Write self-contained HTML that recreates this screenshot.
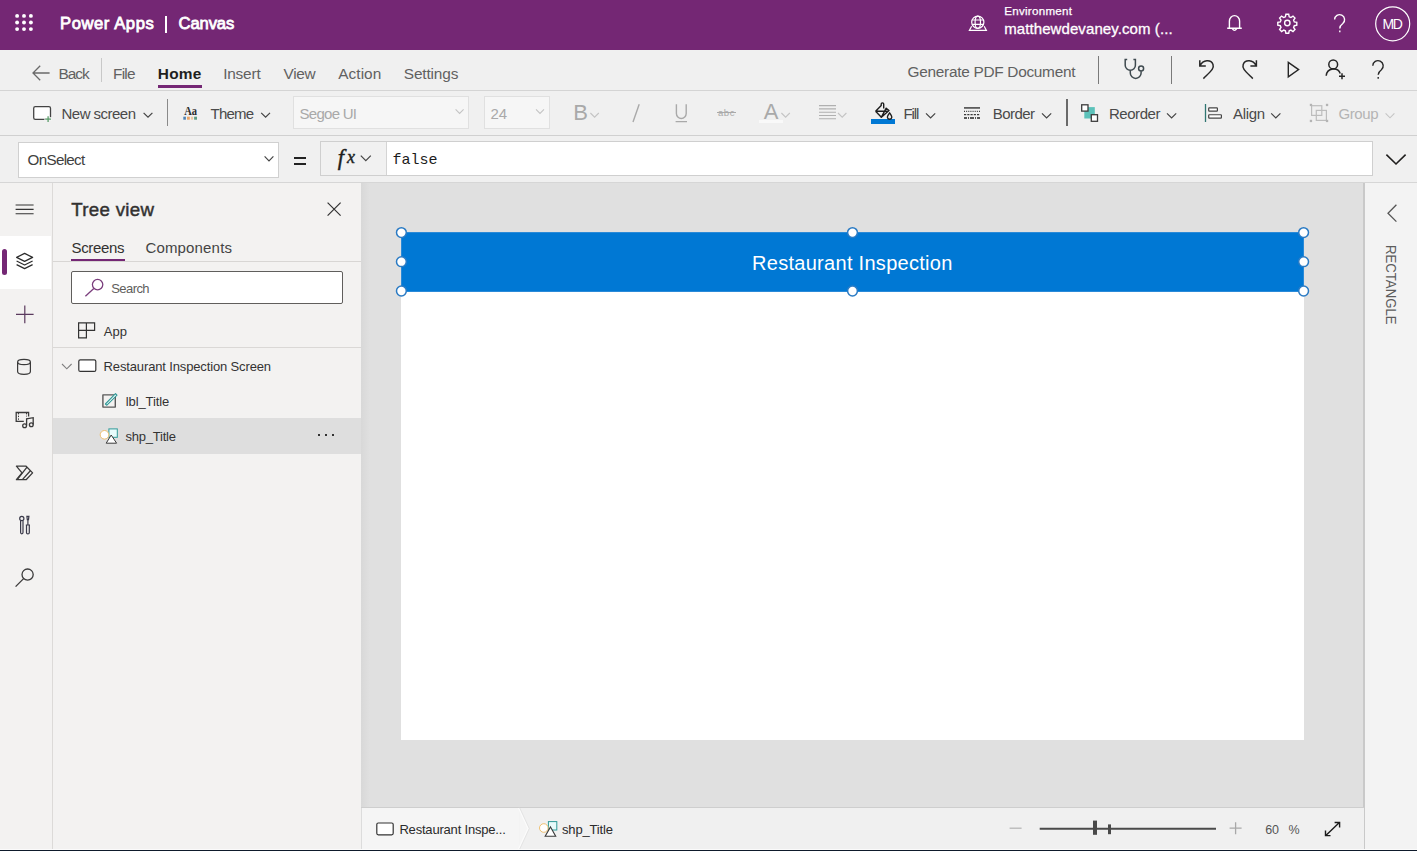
<!DOCTYPE html>
<html><head><meta charset="utf-8">
<style>
*{box-sizing:border-box;margin:0;padding:0}
html,body{width:1417px;height:851px;overflow:hidden;background:#f3f2f1;font-family:"Liberation Sans",sans-serif;color:#323130}
.a{position:absolute}
.t{position:absolute;white-space:pre}
svg{position:absolute;left:0;top:0;overflow:visible}
</style></head><body>
<!-- top header -->
<div class="a" style="left:0;top:0;width:1417px;height:50px;background:#742774"></div>
<!-- menu row -->
<div class="a" style="left:0;top:50px;width:1417px;height:41px;background:#f0f0f0;border-bottom:1px solid #d4d4d4"></div>
<!-- ribbon -->
<div class="a" style="left:0;top:91px;width:1417px;height:45px;background:#f0f0f0;border-bottom:1px solid #d0d0d0"></div>
<!-- formula bar -->
<div class="a" style="left:0;top:136px;width:1417px;height:47px;background:#f0f0f0;border-bottom:1px solid #d6d6d6"></div>
<!-- left rail -->
<div class="a" style="left:0;top:183px;width:53px;height:668px;background:#f3f2f1;border-right:1px solid #dcdad8"></div>
<div class="a" style="left:0;top:236px;width:51px;height:53px;background:#ffffff"></div>
<div class="a" style="left:2px;top:249px;width:5px;height:26px;background:#742774;border-radius:3px"></div>
<!-- tree panel -->
<div class="a" style="left:53px;top:183px;width:308px;height:668px;background:#f3f2f1"></div>
<div class="a" style="left:53px;top:261px;width:308px;height:1px;background:#d8d6d4"></div>
<div class="a" style="left:71px;top:259px;width:54px;height:2px;background:#742774"></div>
<div class="a" style="left:71px;top:271px;width:272px;height:33px;background:#fff;border:1px solid #605e5c;border-radius:2px"></div>
<div class="a" style="left:53px;top:347px;width:308px;height:1px;background:#dad8d6"></div>
<div class="a" style="left:53px;top:418px;width:308px;height:36px;background:#dedede"></div>
<div class="a" style="left:318px;top:434px;width:2px;height:2px;background:#333"></div>
<div class="a" style="left:325px;top:434px;width:2px;height:2px;background:#333"></div>
<div class="a" style="left:332px;top:434px;width:2px;height:2px;background:#333"></div>
<!-- canvas area -->
<div class="a" style="left:361px;top:183px;width:1003px;height:624px;background:#e0e0e0"></div>
<div class="a" style="left:361px;top:183px;width:9px;height:624px;background:linear-gradient(90deg,#d8d8d8,#e0e0e0)"></div>
<div class="a" style="left:401px;top:232px;width:903px;height:508px;background:#fff"></div>
<div class="a" style="left:401px;top:232px;width:903px;height:60px;background:#0078d4"></div>
<!-- right panel -->
<div class="a" style="left:1363px;top:183px;width:54px;height:668px;background:#f3f3f3;border-left:2px solid #c9c9c9"></div>
<div class="t" style="left:1390.700px;top:245.200px;font-size:15px;line-height:15px;color:#5c5c5c;transform-origin:0 0;transform:rotate(90deg) translate(0,-50%) scaleX(0.878)">RECTANGLE</div>
<!-- bottom bar -->
<div class="a" style="left:361px;top:807px;width:1003px;height:44px;background:#f0f0f0;border-top:1px solid #cecece"></div>
<div class="a" style="left:361px;top:808px;width:158px;height:43px;background:#f5f5f5;border-left:1px solid #dcdcdc"></div>
<!-- ribbon boxes -->
<div class="a" style="left:293px;top:96px;width:176px;height:33px;background:#f6f6f6;border:1px solid #e0e0e0"></div>
<div class="a" style="left:484px;top:96px;width:66px;height:33px;background:#f6f6f6;border:1px solid #e0e0e0"></div>
<div class="a" style="left:717px;top:112px;width:19px;height:1px;background:#a9a9a9"></div>
<div class="a" style="left:759px;top:120px;width:24px;height:3px;background:#f9f9f9"></div>
<div class="a" style="left:871px;top:119px;width:24px;height:5px;background:#0078d4"></div>
<div class="a" style="left:167px;top:99px;width:1px;height:27px;background:#8a8a8a"></div>
<div class="a" style="left:1066px;top:99px;width:2px;height:27px;background:#6a6a6a"></div>
<!-- menu dividers -->
<div class="a" style="left:101px;top:58px;width:1px;height:24px;background:#c8c8c8"></div>
<div class="a" style="left:1098px;top:56px;width:1px;height:28px;background:#7a7a7a"></div>
<div class="a" style="left:1171px;top:56px;width:1px;height:28px;background:#7a7a7a"></div>
<div class="a" style="left:158px;top:85px;width:44px;height:3px;background:#742774"></div>
<!-- header bar | -->
<div class="a" style="left:165px;top:16px;width:2px;height:17px;background:#fff"></div>
<!-- formula bar boxes -->
<div class="a" style="left:18px;top:142px;width:261px;height:36px;background:#fff;border:1px solid #d0d0d0"></div>
<div class="a" style="left:320px;top:141px;width:1053px;height:35px;background:#fff;border:1px solid #cfcfcf"></div>
<div class="a" style="left:321px;top:142px;width:66px;height:33px;background:#f1f1f1;border-right:1px solid #d4d4d4"></div>
<div class="a" style="left:294px;top:157px;width:12px;height:2px;background:#222"></div>
<div class="a" style="left:294px;top:163px;width:12px;height:2px;background:#222"></div>
<!-- bottom line -->
<div class="a" style="left:0;top:849px;width:1417px;height:1px;background:#fbfbfb"></div>
<div class="a" style="left:0;top:850px;width:1417px;height:1px;background:#0e1a2b"></div>
<div class="t" style="left:60.0px;top:15.7px;font-size:16.6px;line-height:16.6px;color:#ffffff;letter-spacing:0.58px;-webkit-text-stroke:0.8px #ffffff">Power Apps</div>
<div class="t" style="left:178.6px;top:15.7px;font-size:16.6px;line-height:16.6px;color:#ffffff;letter-spacing:-0.13px;-webkit-text-stroke:0.8px #ffffff">Canvas</div>
<div class="t" style="left:1004.2px;top:4.7px;font-size:11.6px;line-height:11.6px;color:#ffffff;letter-spacing:0.27px;-webkit-text-stroke:0.25px #ffffff">Environment</div>
<div class="t" style="left:1004.2px;top:21.3px;font-size:15px;line-height:15px;color:#ffffff;letter-spacing:0.09px;-webkit-text-stroke:0.3px #ffffff">matthewdevaney.com (...</div>
<div class="t" style="left:1382.5px;top:17.1px;font-size:14px;line-height:14px;color:#ffffff;letter-spacing:-1.50px">MD</div>
<div class="t" style="left:58.5px;top:65.7px;font-size:15.4px;line-height:15.4px;color:#616161;letter-spacing:-1.01px">Back</div>
<div class="t" style="left:113.0px;top:65.7px;font-size:15.4px;line-height:15.4px;color:#616161;letter-spacing:-0.77px">File</div>
<div class="t" style="left:157.8px;top:65.7px;font-size:15.4px;line-height:15.4px;color:#201f1e;letter-spacing:0.24px;font-weight:bold">Home</div>
<div class="t" style="left:223.2px;top:65.7px;font-size:15.4px;line-height:15.4px;color:#616161;letter-spacing:-0.20px">Insert</div>
<div class="t" style="left:283.6px;top:65.7px;font-size:15.4px;line-height:15.4px;color:#616161;letter-spacing:-0.36px">View</div>
<div class="t" style="left:338.3px;top:65.7px;font-size:15.4px;line-height:15.4px;color:#616161;letter-spacing:0.04px">Action</div>
<div class="t" style="left:403.8px;top:65.7px;font-size:15.4px;line-height:15.4px;color:#616161;letter-spacing:-0.15px">Settings</div>
<div class="t" style="left:907.6px;top:64.0px;font-size:15.4px;line-height:15.4px;color:#616161;letter-spacing:-0.29px">Generate PDF Document</div>
<div class="t" style="left:61.5px;top:105.9px;font-size:15px;line-height:15px;color:#4a4a4a;letter-spacing:-0.52px">New screen</div>
<div class="t" style="left:210.6px;top:105.9px;font-size:15px;line-height:15px;color:#4a4a4a;letter-spacing:-0.82px">Theme</div>
<div class="t" style="left:299.5px;top:105.9px;font-size:15px;line-height:15px;color:#a9a9a9;letter-spacing:-0.72px">Segoe UI</div>
<div class="t" style="left:490.5px;top:105.9px;font-size:15px;line-height:15px;color:#a9a9a9;letter-spacing:-0.19px">24</div>
<div class="t" style="left:573.2px;top:102.1px;font-size:22px;line-height:22px;color:#a9a9a9;letter-spacing:0.00px">B</div>
<div class="t" style="left:718.0px;top:108.2px;font-size:9.5px;line-height:9.5px;color:#a9a9a9;letter-spacing:0.59px">abc</div>
<div class="t" style="left:763.8px;top:101.0px;font-size:22px;line-height:22px;color:#a9a9a9;letter-spacing:0.00px">A</div>
<div class="t" style="left:903.5px;top:106.0px;font-size:15px;line-height:15px;color:#4a4a4a;letter-spacing:-1.12px">Fill</div>
<div class="t" style="left:992.8px;top:106.0px;font-size:15px;line-height:15px;color:#4a4a4a;letter-spacing:-0.57px">Border</div>
<div class="t" style="left:1109.0px;top:106.0px;font-size:15px;line-height:15px;color:#4a4a4a;letter-spacing:-0.47px">Reorder</div>
<div class="t" style="left:1233.0px;top:106.0px;font-size:15px;line-height:15px;color:#4a4a4a;letter-spacing:-0.34px">Align</div>
<div class="t" style="left:1338.5px;top:106.0px;font-size:15px;line-height:15px;color:#b4b4b4;letter-spacing:-0.40px">Group</div>
<div class="t" style="left:27.6px;top:152.1px;font-size:15.2px;line-height:15.2px;color:#404040;letter-spacing:-0.70px">OnSelect</div>
<div class="t" style="left:337.8px;top:146.8px;font-size:22.5px;line-height:22.5px;color:#201f1e;letter-spacing:0.00px;-webkit-text-stroke:0.4px #201f1e;font-style:italic;font-family:'Liberation Serif', serif">f</div>
<div class="t" style="left:347.0px;top:147.5px;font-size:18px;line-height:18px;color:#201f1e;letter-spacing:0.00px;-webkit-text-stroke:0.4px #201f1e;font-style:italic;font-family:'Liberation Serif', serif">x</div>
<div class="t" style="left:392.5px;top:152.5px;font-size:15px;line-height:15px;color:#1b1b1b;letter-spacing:0.02px;font-family:'Liberation Mono', monospace">false</div>
<div class="t" style="left:71.2px;top:201.2px;font-size:18.7px;line-height:18.7px;color:#323130;letter-spacing:0.31px;-webkit-text-stroke:0.45px #323130">Tree view</div>
<div class="t" style="left:71.6px;top:240.3px;font-size:15px;line-height:15px;color:#323130;letter-spacing:-0.37px">Screens</div>
<div class="t" style="left:145.4px;top:240.3px;font-size:15px;line-height:15px;color:#444444;letter-spacing:0.17px">Components</div>
<div class="t" style="left:111.2px;top:282.0px;font-size:13px;line-height:13px;color:#605e5c;letter-spacing:-0.56px">Search</div>
<div class="t" style="left:103.8px;top:325.4px;font-size:13px;line-height:13px;color:#333333;letter-spacing:0.03px">App</div>
<div class="t" style="left:103.6px;top:360.0px;font-size:13px;line-height:13px;color:#333333;letter-spacing:-0.14px">Restaurant Inspection Screen</div>
<div class="t" style="left:125.8px;top:395.0px;font-size:13px;line-height:13px;color:#333333;letter-spacing:-0.12px">lbl_Title</div>
<div class="t" style="left:125.6px;top:429.5px;font-size:13px;line-height:13px;color:#333333;letter-spacing:-0.24px">shp_Title</div>
<div class="t" style="left:752.0px;top:252.9px;font-size:20px;line-height:20px;color:#ffffff;letter-spacing:0.29px">Restaurant Inspection</div>
<div class="t" style="left:399.4px;top:823.2px;font-size:13px;line-height:13px;color:#2b2b2b;letter-spacing:-0.19px">Restaurant Inspe...</div>
<div class="t" style="left:562.0px;top:823.2px;font-size:13px;line-height:13px;color:#2b2b2b;letter-spacing:-0.16px">shp_Title</div>
<div class="t" style="left:1265.2px;top:824.4px;font-size:12.5px;line-height:12.5px;color:#555555;letter-spacing:-0.11px">60</div>
<div class="t" style="left:1288.6px;top:824.4px;font-size:12.5px;line-height:12.5px;color:#555555;letter-spacing:0.00px">%</div>
<svg width="1417" height="851" viewBox="0 0 1417 851" fill="none" stroke-linecap="butt" stroke-linejoin="miter">
<!-- waffle -->
<g fill="#fff" stroke="none">
<circle cx="17.1" cy="15.9" r="1.95"/><circle cx="24" cy="15.9" r="1.95"/><circle cx="30.9" cy="15.9" r="1.95"/>
<circle cx="17.1" cy="22.5" r="1.95"/><circle cx="24" cy="22.5" r="1.95"/><circle cx="30.9" cy="22.5" r="1.95"/>
<circle cx="17.1" cy="29.1" r="1.95"/><circle cx="24" cy="29.1" r="1.95"/><circle cx="30.9" cy="29.1" r="1.95"/>
</g>
<!-- environment globe -->
<g stroke="#fff" stroke-width="1.2">
<circle cx="977.8" cy="22.2" r="6.1"/><ellipse cx="977.8" cy="22.2" rx="2.7" ry="6.1"/>
<path d="M972.3 20H983.3M972.3 24.4H983.3"/>
<path d="M971.6 26.2L969.4 30.4H986.4L984.2 26.2"/>
</g>
<!-- bell -->
<g stroke="#fff" stroke-width="1.4">
<path d="M1227.2 28.3H1241.8M1229.4 28.3V21.2a5.1 5.6 0 0 1 10.2 0V28.3"/>
<path d="M1232.3 28.6q2.2 3.6 4.4 0"/>
</g>
<!-- gear -->
<g stroke="#fff" stroke-width="1.4">
<circle cx="1287.3" cy="23" r="2.7"/>
<path d="M1285.9 14.3h2.8l.5 2.5 1.7.7 2.1-1.4 2 2-1.4 2.1.7 1.7 2.5.5v2.8l-2.5.5-.7 1.7 1.4 2.1-2 2-2.1-1.4-1.7.7-.5 2.5h-2.8l-.5-2.5-1.7-.7-2.1 1.4-2-2 1.4-2.1-.7-1.7-2.5-.5v-2.8l2.5-.5.7-1.7-1.4-2.1 2-2 2.1 1.4 1.7-.7z"/>
</g>
<!-- header ? -->
<g stroke="#fff" stroke-width="1.4">
<path d="M1334.6 19.6a5 5 0 1 1 8.2 3.9q-3 2.2-3 4.9"/>
<path d="M1339.8 30.4v1.8"/>
</g>
<!-- MD circle -->
<circle cx="1392.7" cy="23.8" r="17" stroke="#fff" stroke-width="1.2"/>

<!-- back arrow -->
<path d="M49.6 73H33.2M40.2 65.8L33 73L40.2 80.2" stroke="#6a6a6a" stroke-width="1.3"/>
<!-- stethoscope -->
<g stroke="#3f4a4f" stroke-width="1.5">
<path d="M1127.2 59.6H1125.2V65.2a5.1 5.1 0 0 0 10.2 0V59.6H1133.4"/>
<path d="M1130.3 70.3V73a5.4 5.4 0 0 0 10.8 0V71.2"/>
<circle cx="1141.1" cy="68.5" r="2.5"/>
</g>
<!-- undo -->
<path d="M1199.8 60.2V66H1205.8M1200 65.8C1203 59.6 1211 59.2 1213 64.5C1214.4 68.5 1211 71 1203.4 78.6" stroke="#262626" stroke-width="1.5"/>
<!-- redo -->
<path d="M1256.4 60.2V66H1250.4M1256.2 65.8C1253.2 59.6 1245.2 59.2 1243.2 64.5C1241.8 68.5 1245.2 71 1252.8 78.6" stroke="#262626" stroke-width="1.5"/>
<!-- play -->
<path d="M1288.3 62.4V76.8L1298.6 69.6Z" stroke="#262626" stroke-width="1.4"/>
<!-- user plus -->
<g stroke="#262626" stroke-width="1.5">
<circle cx="1333.2" cy="64.4" r="4.4"/>
<path d="M1326.2 75.8C1326.8 67.8 1338 66.6 1340.2 73.4"/>
<path d="M1339 76.2H1345M1342 73.2V79.2"/>
</g>
<!-- menu ? -->
<g stroke="#262626" stroke-width="1.4">
<path d="M1372.8 65.8a5.2 5.2 0 1 1 8.6 4q-3.2 2.4-3.2 5"/>
<path d="M1378.2 77v1.8"/>
</g>

<!-- new screen icon -->
<rect x="33.700" y="106.600" width="16.800" height="12.700" rx="1.600" stroke="#444" stroke-width="1.300" fill="#fff"/>
<rect x="44.400" y="118.400" width="7.600" height="2" fill="#f6f6f6" stroke="none"/>
<rect x="49.600" y="117.200" width="2.400" height="3.200" fill="#f4f4f4" stroke="none"/>
<path d="M45.200 119.200H51M48.100 116.300V122" stroke="#5d9d6c" stroke-width="1.300"/>
<!-- chevrons ribbon -->
<g stroke="#444" stroke-width="1.2">
<path d="M143.6 112.8L148 117.2L152.4 112.8"/>
<path d="M261.2 112.8L265.6 117.2L270 112.8"/>
<path d="M926 113.4L930.6 118L935.2 113.4"/>
<path d="M1042 113.4L1046.6 118L1051.2 113.4"/>
<path d="M1167 113.4L1171.6 118L1176.2 113.4"/>
<path d="M1271.2 113.4L1275.8 118L1280.4 113.4"/>
</g>
<g stroke="#c4c4c4" stroke-width="1.1">
<path d="M455.6 109.4L459.6 113.4L463.6 109.4"/>
<path d="M536 109.4L540 113.4L544 109.4"/>
<path d="M590.4 113L594.6 117.2L598.8 113"/>
<path d="M781.4 113L785.6 117.2L789.8 113"/>
<path d="M838 113L842.2 117.2L846.4 113"/>
<path d="M1385.6 113.4L1390 117.8L1394.4 113.4"/>
</g>
<!-- theme icon -->
<g stroke="none">
<rect x="183.300" y="116.700" width="2.600" height="3" fill="#4f82b2"/>
<rect x="187" y="116.700" width="2.800" height="3" fill="#eaa465"/>
<rect x="190.900" y="116.700" width="2.200" height="3" fill="#ecc9a2"/>
<rect x="194.100" y="116.700" width="2.900" height="3" fill="#5e9c84"/>
</g>
<text x="184.200" y="114.600" font-family="'Liberation Serif',serif" font-size="12" font-weight="bold" fill="#2a2a2a" stroke="none" textLength="12.800" lengthAdjust="spacingAndGlyphs">Aa</text>
<!-- italic slash -->
<path d="M639.2 104.2L633 122" stroke="#a9a9a9" stroke-width="1.4"/>
<!-- underline U -->
<path d="M676.4 104.2V113.6a4.9 4.9 0 0 0 9.8 0V104.2M675.6 121.6H687" stroke="#a9a9a9" stroke-width="1.4"/>
<!-- text align -->
<path d="M819 105.6H836M819 108.9H836M819 112.2H836M819 115.5H836M819 118.8H836" stroke="#b0b0b0" stroke-width="1.1"/>
<!-- fill bucket -->
<g stroke="#1e1e1e" stroke-width="1.4" stroke-linejoin="round">
<path d="M875.600 111.300L881.200 105.600V104.100a1.250 1.250 0 0 1 2.500 0V108.600M875.600 111.300H887.600M886.200 108.200L889 110.500L881.400 117.200Z" fill="none"/>
<path d="M875.600 111.300L881.400 117.200"/>
<path d="M889.600 112.800q-2.600 3.600-2.100 4.800a2.150 2.150 0 0 0 4.200 0q.5-1.200-2.100-4.800z"/>
</g>
<!-- border icon -->
<g stroke="#3a3a3a">
<path d="M964 107.900H980" stroke-width="1.700" stroke="#555"/>
<path d="M964 111.400H980" stroke-width="1.300" stroke-dasharray="1 1.140"/>
<path d="M964 114.600H980" stroke-width="1.400" stroke-dasharray="2.200 1.050"/>
<path d="M964 118H980" stroke-width="1.900" stroke-dasharray="3 1 1 1 4 1 1 1 3" stroke="#555"/>
</g>
<!-- reorder -->
<rect x="1084.300" y="107.100" width="10.500" height="11.400" fill="#5cc2ba" stroke="none"/>
<rect x="1081.700" y="104.800" width="6.300" height="6.300" fill="#fff" stroke="#3c3c3c" stroke-width="1.300"/>
<rect x="1091.300" y="114.700" width="6.200" height="6.600" fill="#fff" stroke="#3c3c3c" stroke-width="1.300"/>
<!-- align -->
<path d="M1205.500 104V122" stroke="#2f7571" stroke-width="1.300"/>
<rect x="1208.700" y="107.800" width="8.700" height="3.400" rx=".6" stroke="#444" stroke-width="1.200" fill="#fff"/>
<rect x="1208.700" y="114.750" width="12.700" height="3.400" rx=".6" stroke="#444" stroke-width="1.200" fill="#fff"/>
<!-- group -->
<g stroke="#bdbdbd" stroke-width="1.2">
<rect x="1311.600" y="105.700" width="10.200" height="9.700"/>
<rect x="1316.300" y="110.400" width="10.100" height="10"/>
</g>
<g fill="#b4b4b4" stroke="none">
<rect x="1309.800" y="103.800" width="2.300" height="2.300"/><rect x="1325.900" y="103.800" width="2.300" height="2.300"/>
<rect x="1309.800" y="119.800" width="2.300" height="2.300"/><rect x="1325.900" y="119.800" width="2.300" height="2.300"/>
</g>

<!-- formula bar chevrons -->
<path d="M264.6 156.4L269 160.8L273.4 156.4" stroke="#444" stroke-width="1.2"/>
<path d="M360.8 155.6L365.8 160.6L370.8 155.6" stroke="#444" stroke-width="1.2"/>
<path d="M1386.4 154.6L1396 164L1405.6 154.6" stroke="#201f1e" stroke-width="1.6"/>

<!-- rail: hamburger -->
<path d="M15.6 205H33.6M15.6 209.4H33.6M15.6 213.7H33.6" stroke="#333" stroke-width="1.1"/>
<!-- layers -->
<g stroke="#2b2b2b" stroke-width="1.2" stroke-linejoin="round">
<path d="M24.6 253.4L32.6 257.4L24.6 261.4L16.6 257.4Z"/>
<path d="M16.6 261L24.6 265L32.6 261"/>
<path d="M16.6 264.6L24.6 268.6L32.6 264.6"/>
</g>
<!-- plus -->
<path d="M16 314.4H33.6M24.8 305.6V323.2" stroke="#5a3a5e" stroke-width="1.2"/>
<!-- cylinder -->
<g stroke="#3a3a3a" stroke-width="1.2">
<ellipse cx="24" cy="362" rx="6.4" ry="2.6"/>
<path d="M17.6 362V371.6a6.4 2.8 0 0 0 12.8 0V362"/>
</g>
<!-- media -->
<g stroke="#3a3a3a" stroke-width="1.300">
<path d="M23.800 421.400H16.200V412.500H28.600V416.600"/>
<path d="M18.500 413V421" stroke-dasharray="1.400 1.300" stroke-width="1"/>
<path d="M26.500 413V416.500" stroke-dasharray="1.400 1.300" stroke-width="1"/>
<path d="M26.600 425.400V418.900L33.200 417.700V424.400"/>
<circle cx="24.600" cy="425.800" r="1.900"/><circle cx="31.300" cy="424.700" r="1.900"/>
</g>
<!-- flow -->
<g stroke="#3a3a3a" stroke-width="1.300" stroke-linejoin="round">
<path d="M16.400 466.200H26.100L32.600 472.900L26.100 479.700H16.400L22 472.900Z"/>
<path d="M17.400 479.400L27 467.200M22.600 479.400L30.400 470.800"/>
</g>
<!-- tools -->
<g stroke="#3a3a4a" stroke-width="1.200">
<circle cx="21.800" cy="518.500" r="2.100"/>
<path d="M20.600 520.400V532.600a1.200 1.200 0 0 0 2.400 0V520.400"/>
<path d="M26.900 516.400H28.900L28.500 519.600H27.300ZM27.900 519.600V525M25.800 525H30M26.500 525V532.700a1.400 1.200 0 0 0 2.800 0V525"/>
</g>
<!-- rail search -->
<g stroke="#3a3a3a" stroke-width="1.3">
<circle cx="27.6" cy="574.6" r="5.6"/><path d="M23.6 578.6L15.6 586.6"/>
</g>

<!-- tree close X -->
<path d="M327.6 202.6L340.6 215.600M340.6 202.6L327.6 215.600" stroke="#333" stroke-width="1.2"/>
<!-- tree search icon -->
<g stroke="#7a3d7c" stroke-width="1.3">
<circle cx="97.6" cy="284.6" r="5.2"/><path d="M93.8 288.4L85.4 296.2"/>
</g>
<!-- app icon -->
<path d="M78.600 322.900H94.600V330.400H86.400V337.800H78.600ZM86.400 322.900V330.400M78.600 330.400H86.400" stroke="#333" stroke-width="1.200"/>
<!-- tree chevron -->
<path d="M62 364L66.800 368.800L71.600 364" stroke="#808080" stroke-width="1.1"/>
<!-- screen icon -->
<rect x="78.800" y="359.800" width="17" height="11.600" rx="1.5" stroke="#333" stroke-width="1.2" fill="#fff"/>
<!-- lbl icon -->
<g stroke-width="1.400">
<rect x="102.900" y="394.900" width="12.400" height="12.200" stroke="#5a5a5a" stroke-linejoin="round"/>
<path d="M105.400 404L115.500 393.600L117 395.100L106.900 405.200Z" stroke="#2f9a98" fill="#fff" stroke-width="1.100" stroke-linejoin="round"/>
</g>
<!-- shp icon (tree) -->
<g stroke-width="1.200">
<rect x="108.900" y="428.900" width="8.400" height="8.400" stroke="#2f9a98" fill="#e8fbfb" stroke-width="1"/>
<circle cx="104.500" cy="434.800" r="4.300" stroke="#efc070" fill="#fff" stroke-width="1"/>
<path d="M111.200 435L116.600 443.200H106.200Z" stroke="#3a3a3a" fill="#fff" stroke-width="1"/>
</g>

<!-- selection handles -->
<rect x="401.500" y="232.500" width="902" height="59" stroke="#2a8ad8" stroke-width="1"/>
<g fill="#fff" stroke="#2b7bc4" stroke-width="1.500">
<circle cx="401.400" cy="232.600" r="4.900"/><circle cx="852.500" cy="232.600" r="4.900"/><circle cx="1303.600" cy="232.600" r="4.900"/>
<circle cx="401.400" cy="261.700" r="4.900"/><circle cx="1303.600" cy="261.700" r="4.900"/>
<circle cx="401.400" cy="291" r="4.900"/><circle cx="852.500" cy="291" r="4.900"/><circle cx="1303.600" cy="291" r="4.900"/>
</g>
<!-- right panel chevron -->
<path d="M1396.400 204.800L1388 213.200L1396.400 221.600" stroke="#555" stroke-width="1.3"/>

<!-- bottom bar -->
<path d="M519.500 808L529 828.500L519.500 849V808Z" fill="#f5f5f5" stroke="none"/>
<path d="M518.600 808L528.100 828.500L518.600 849" stroke="#fbfbfb" stroke-width="1.400"/>
<path d="M519.800 808L529.300 828.500L519.800 849" stroke="#e4e4e4" stroke-width="1"/>
<rect x="376.800" y="823" width="16.400" height="11.800" rx="1.500" stroke="#333" stroke-width="1.200" fill="#fff"/>
<g stroke-width="1.200">
<rect x="548.400" y="821.600" width="8.400" height="8.400" stroke="#2f9a98" fill="#e8fbfb" stroke-width="1"/>
<circle cx="543.800" cy="828" r="4.300" stroke="#efc070" fill="#fff" stroke-width="1"/>
<path d="M550.500 826.900L555.700 836.200H545.200Z" stroke="#3a3a3a" fill="#fff" stroke-width="1.100"/>
</g>
<path d="M1009.600 828.200H1021.600" stroke="#b6b6b6" stroke-width="1.300"/>
<path d="M1039.700 828.800H1216" stroke="#4a4a4a" stroke-width="2"/>
<rect x="1093" y="820.600" width="4" height="14.200" fill="#4a4a4a" stroke="none"/>
<rect x="1108" y="824.400" width="3" height="9.800" fill="#4a4a4a" stroke="none"/>
<path d="M1229.600 828.200H1241.600M1235.600 822.200V834.200" stroke="#a8a8a8" stroke-width="1.300"/>
<path d="M1325.800 835.400L1339.400 822.600M1334.600 822.500H1339.600V827.500M1325.500 830.600V835.600H1330.500" stroke="#1c1c1c" stroke-width="1.400"/>

</svg>
</body></html>
